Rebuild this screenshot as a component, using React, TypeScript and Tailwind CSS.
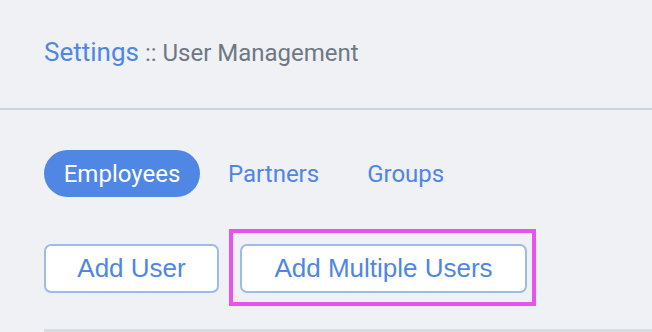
import React from "react";

export default function App() {
  return (
    <div className="w-[652px] h-[332px] overflow-hidden bg-[#f0f1f5] font-['Roboto',sans-serif]">
      <div className="h-[110px] pl-[44px] pt-[37px] border-b-2 border-[#cbd2db]">
        <div className="text-[26px] leading-[30px] whitespace-nowrap">
          <span className="text-[#4f86e4]">Settings</span>
          <span className="text-[#6e7883] text-[24px]"> :: User Management</span>
        </div>
      </div>
      <div className="pl-[44px] pt-[40px] flex items-center">
        <button className="h-[47px] w-[156px] rounded-full bg-[#5087e4] text-white text-[24px]">
          Employees
        </button>
        <button className="ml-[28px] text-[#4f86e4] text-[24px]">Partners</button>
        <button className="ml-[48px] text-[#4f86e4] text-[24px]">Groups</button>
      </div>
      <div className="pl-[44px] pt-[32px] flex items-start font-['Liberation_Sans',Arial,sans-serif]">
        <button className="mt-[15px] h-[49px] w-[175px] rounded-[7px] border-2 border-[#9bbbe9] bg-white text-[#4f86e4] text-[26px]">
          Add User
        </button>
        <div className="ml-[10px] border-[4px] border-[#ea52f0] pt-[11px] pb-[9px] pl-[7px] pr-[5px]">
          <button className="h-[49px] w-[287px] rounded-[7px] border-2 border-[#9bbbe9] bg-white text-[#4f86e4] text-[26px]">
            Add Multiple Users
          </button>
        </div>
      </div>
      <div className="ml-[44px] mt-[23px] h-[4px] bg-[#d8dde2]" />
    </div>
  );
}
